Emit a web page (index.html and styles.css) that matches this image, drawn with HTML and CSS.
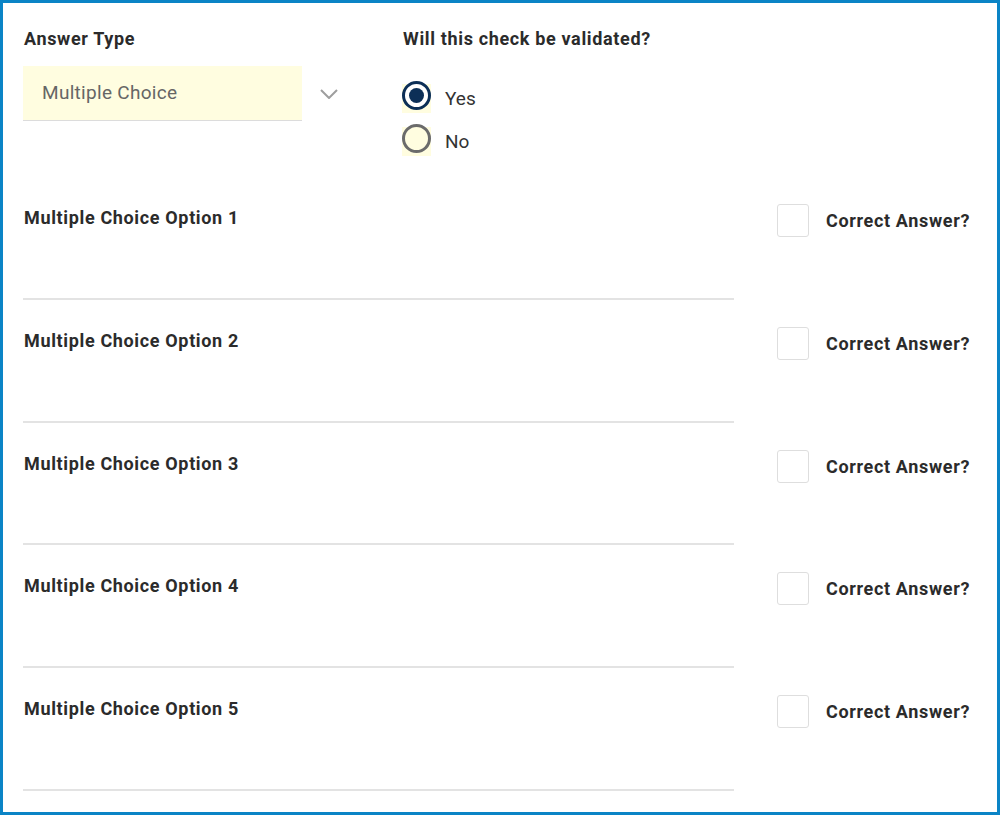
FILE: index.html
```html
<!DOCTYPE html>
<html lang="en">
<head>
    <meta charset="UTF-8">
    <meta name="viewport" content="width=device-width, initial-scale=1.0">
    <title>Check Answers</title>
    <link rel="stylesheet" href="styles.css">
</head>
<body>
    <div class="frame">
        <div class="top">
            <div class="field">
                <label class="field-label">Answer Type</label>
                <div class="select-wrap">
                    <div class="select">Multiple Choice</div>
                    <svg class="chevron" width="18" height="10" viewBox="0 0 18 10">
                        <path d="M1 1 L9 9 L17 1" fill="none" stroke="#9e9e9e" stroke-width="2"/>
                    </svg>
                </div>
            </div>
            <div class="field">
                <label class="field-label">Will this check be validated?</label>
                <div class="radios">
                    <div class="radio-row">
                        <span class="radio checked"><span class="dot"></span></span>
                        <span>Yes</span>
                    </div>
                    <div class="radio-row">
                        <span class="radio"></span>
                        <span>No</span>
                    </div>
                </div>
            </div>
        </div>

        <div class="option-row">
            <div class="option-field"><div class="option-label">Multiple Choice Option 1</div></div>
            <div class="correct"><span class="checkbox"></span><span>Correct Answer?</span></div>
        </div>
        <div class="option-row">
            <div class="option-field"><div class="option-label">Multiple Choice Option 2</div></div>
            <div class="correct"><span class="checkbox"></span><span>Correct Answer?</span></div>
        </div>
        <div class="option-row">
            <div class="option-field"><div class="option-label">Multiple Choice Option 3</div></div>
            <div class="correct"><span class="checkbox"></span><span>Correct Answer?</span></div>
        </div>
        <div class="option-row">
            <div class="option-field"><div class="option-label">Multiple Choice Option 4</div></div>
            <div class="correct"><span class="checkbox"></span><span>Correct Answer?</span></div>
        </div>
        <div class="option-row">
            <div class="option-field"><div class="option-label">Multiple Choice Option 5</div></div>
            <div class="correct"><span class="checkbox"></span><span>Correct Answer?</span></div>
        </div>
    </div>
</body>
</html>
```

FILE: styles.css
```css
body {
    margin: 0;
    font-family: Roboto, "Liberation Sans", sans-serif;
    color: #2b2b2b;
    background-color: #ffffff;
}
.frame {
    height: 815px;
    box-sizing: border-box;
    border: 3px solid #0b84c6;
    padding: 0 0 0 20px;
    overflow: hidden;
}
.top {
    display: grid;
    grid-template-columns: 379px 1fr;
    padding-top: 26px;
    height: 148px;
}
.field-label {
    display: block;
    padding-left: 1px;
    font-size: 18px;
    letter-spacing: 0.65px;
    font-weight: bold;
    line-height: 20px;
    color: #2b2b2b;
}
.select-wrap {
    display: flex;
    align-items: center;
    margin-top: 17px;
}
.select {
    width: 260px;
    height: 54px;
    background-color: #fffde0;
    border-bottom: 1px solid #dcdcdc;
    padding-left: 19px;
    font-size: 19px;
    letter-spacing: 0.3px;
    line-height: 54px;
    color: #666666;
}
.chevron {
    margin-left: 18px;
}
.radios {
    margin-top: 28px;
}
.radio-row {
    display: flex;
    align-items: center;
    height: 43px;
    font-size: 19px;
    color: #333333;
}
.radio {
    position: relative;
    width: 29px;
    height: 29px;
    margin-right: 14px;
    background-color: #fffde0;
    box-sizing: border-box;
}
.radio::before {
    content: "";
    position: absolute;
    left: 0;
    top: -3px;
    width: 29px;
    height: 29px;
    box-sizing: border-box;
    border: 3px solid #6b6b6b;
    border-radius: 50%;
    background-color: #fffde0;
}
.radio.checked::before {
    border-color: #0c2f57;
    background-color: #ffffff;
}
.dot {
    position: absolute;
    left: 7px;
    top: 4px;
    width: 15px;
    height: 15px;
    border-radius: 50%;
    background-color: #0c2f57;
    z-index: 1;
}
.option-row {
    display: flex;
    height: 122.75px;
}
.option-field {
    width: 711px;
    border-bottom: 2px solid #e3e3e3;
    box-sizing: border-box;
}
.option-label {
    padding-top: 30px;
    padding-left: 1px;
    font-size: 18px;
    letter-spacing: 0.65px;
    font-weight: bold;
    line-height: 21px;
}
.correct {
    display: flex;
    align-items: center;
    margin-left: 43px;
    margin-top: 27px;
    height: 33px;
    font-size: 18px;
    letter-spacing: 0.65px;
    font-weight: bold;
}
.checkbox {
    width: 32px;
    height: 33px;
    box-sizing: border-box;
    border: 1px solid #dedede;
    border-radius: 3px;
    margin-right: 17px;
}
```
